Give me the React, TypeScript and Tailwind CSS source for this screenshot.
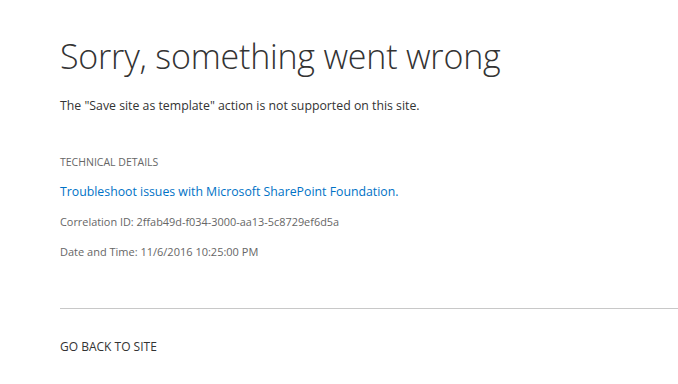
export default function App() {
  return (
    <div className="min-h-screen w-full bg-white overflow-hidden" style={{ fontFamily: '"Open Sans", "Noto Sans", sans-serif' }}>
      <div className="pl-[60px] pt-[33px]">
        <h1 className="text-[34px] leading-[46px] font-light text-[#333333] tracking-[-0.2px]">
          Sorry, something went wrong
        </h1>
        <p className="mt-[18px] text-[12.3px] leading-[18px] text-[#333333]">
          The "Save site as template" action is not supported on this site.
        </p>

        <div className="mt-[40px] text-[10.5px] leading-[14px] text-[#666666]">TECHNICAL DETAILS</div>
        <a href="#" className="mt-[14px] block text-[12.3px] leading-[18px] text-[#0072c6]">
          Troubleshoot issues with Microsoft SharePoint Foundation.
        </a>
        <div className="mt-[12px] text-[10.9px] leading-[18px] text-[#666666]">
          Correlation ID: 2ffab49d-f034-3000-aa13-5c8729ef6d5a
        </div>
        <div className="mt-[12px] text-[11px] leading-[18px] text-[#666666]">
          Date and Time: 11/6/2016 10:25:00 PM
        </div>

        <div className="mt-[47px] border-t border-[#c8c8c8]" />

        <a href="#" className="mt-[29px] block text-[12px] leading-[18px] text-[#333333]">
          GO BACK TO SITE
        </a>
      </div>
    </div>
  );
}
